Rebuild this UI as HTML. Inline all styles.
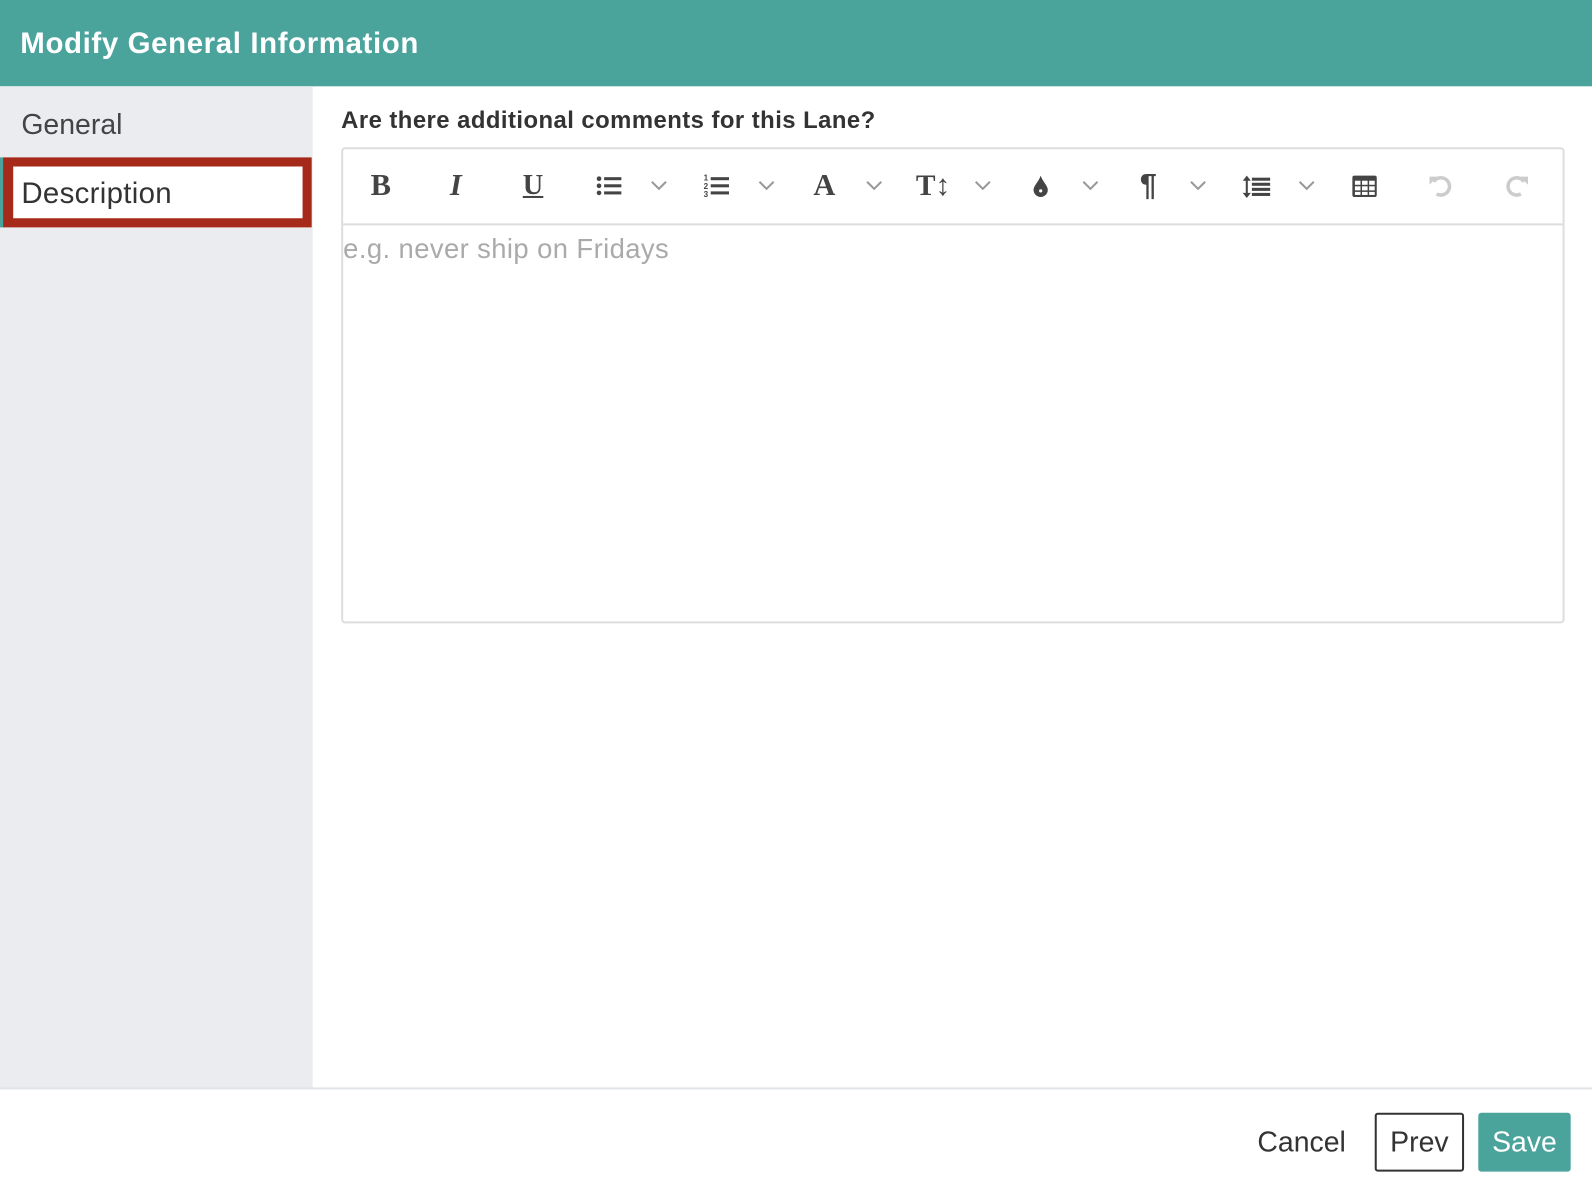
<!DOCTYPE html>
<html><head><meta charset="utf-8"><style>
*{margin:0;padding:0;box-sizing:border-box}
body{width:1592px;height:1190px;background:#fff;font-family:"Liberation Sans",sans-serif;position:relative;overflow:hidden;color:#333}
#w{position:absolute;left:0;top:0;width:1568px;height:1172px;transform:scale(1.0153);transform-origin:0 0}
.a{position:absolute}
.hdr{left:0;top:0;width:1568px;height:85px;background:#4aa49c}
.title{left:20px;top:27px;color:#fff;font-weight:bold;font-size:29px;letter-spacing:0.6px}
.side{left:0;top:85px;width:308px;height:987px;background:#ebecf0}
.gen{left:21px;top:107px;font-size:28px;color:#444}
.desc{left:3px;top:155px;width:304px;height:69px;border:9px solid #a52a1a;border-left-width:10px;background:#fff}
.desc span{position:absolute;left:8px;top:11px;font-size:29px;letter-spacing:0.3px;color:#333}
.label{left:336px;top:105px;font-weight:bold;font-size:23.5px;letter-spacing:0.45px;color:#333}
.ed{left:336px;top:145px;width:1205px;height:469px;border:2px solid #ddd;border-radius:4px}
.tb{left:338px;top:220px;width:1201px;height:2px;background:#ddd}
.ph{left:338px;top:230px;font-size:27px;letter-spacing:0.4px;color:#aaa}
.ic{position:absolute;top:168px;width:30px;height:30px;transform:translateX(-50%);display:flex;align-items:center;justify-content:center}
.s{font-family:"Liberation Serif",serif;font-weight:bold;font-size:30px;color:#444}
.foot{left:0;top:1071px;width:1568px;height:2px;background:#e0e3e7}
.btn{top:1096px;height:58px;font-size:28px;display:flex;align-items:center;justify-content:center;border-radius:3px}
</style></head><body><div id="w">
<div class="a hdr"></div>
<div class="a title">Modify General Information</div>
<div class="a side"></div>
<div class="a" style="left:0;top:155px;width:3px;height:69px;background:#4aa49c"></div>
<div class="a gen">General</div>
<div class="a desc"><span>Description</span></div>
<div class="a label">Are there additional comments for this Lane?</div>
<div class="a ed"></div>
<div class="a tb"></div>
<div class="a ph">e.g. never ship on Fridays</div>

<div class="ic s" style="left:375px">B</div>
<div class="ic s" style="left:449px;font-style:italic">I</div>
<div class="ic s" style="left:525px;text-decoration:underline;font-size:28px">U</div>
<svg class="ic" style="left:600px" viewBox="0 0 30 30"><g fill="#444"><circle cx="5" cy="8" r="2.3"/><circle cx="5" cy="15" r="2.3"/><circle cx="5" cy="22" r="2.3"/><rect x="10" y="6.5" width="17" height="3"/><rect x="10" y="13.5" width="17" height="3"/><rect x="10" y="20.5" width="17" height="3"/></g></svg>
<svg class="ic" style="left:706px" viewBox="0 0 30 30"><g fill="#444"><text x="2" y="10" font-size="8" font-family="Liberation Sans" font-weight="bold">1</text><text x="2" y="18" font-size="8" font-family="Liberation Sans" font-weight="bold">2</text><text x="2" y="26" font-size="8" font-family="Liberation Sans" font-weight="bold">3</text><rect x="9" y="6.5" width="18" height="3"/><rect x="9" y="13.5" width="18" height="3"/><rect x="9" y="20.5" width="18" height="3"/></g></svg>
<div class="ic s" style="left:812px">A</div>
<div class="ic s" style="left:919px;font-size:29px">T↕</div>
<svg class="ic" style="left:1025px" viewBox="0 0 30 30"><path d="M15 5 C17 11 22 15 22 19 a7 7 0 0 1 -14 0 C8 15 13 11 15 5Z" fill="#444"/><circle cx="15" cy="20" r="1.6" fill="#fff"/></svg>
<div class="ic s" style="left:1131px;font-family:'Liberation Sans';font-size:30px">¶</div>
<svg class="ic" style="left:1238px" viewBox="0 0 30 30"><g fill="#444"><rect x="10" y="7" width="18" height="3"/><rect x="10" y="12" width="18" height="3"/><rect x="10" y="17" width="18" height="3"/><rect x="10" y="22" width="18" height="3"/><rect x="4" y="8" width="2" height="16"/><path d="M1 10 L5 5 L9 10Z M1 22 L5 27 L9 22Z"/></g></svg>
<svg class="ic" style="left:1344px" viewBox="0 0 30 30"><rect x="3" y="5" width="24" height="21" rx="2" fill="#444"/><g fill="#fff"><rect x="5.5" y="10" width="5.5" height="4"/><rect x="12.5" y="10" width="5.5" height="4"/><rect x="19.5" y="10" width="5.5" height="4"/><rect x="5.5" y="15.5" width="5.5" height="4"/><rect x="12.5" y="15.5" width="5.5" height="4"/><rect x="19.5" y="15.5" width="5.5" height="4"/><rect x="5.5" y="21" width="5.5" height="3"/><rect x="12.5" y="21" width="5.5" height="3"/><rect x="19.5" y="21" width="5.5" height="3"/></g></svg>
<svg class="ic" style="left:1419px" viewBox="0 0 30 30"><path d="M8 11 A8.5 8.5 0 1 1 11 23" fill="none" stroke="#ccc" stroke-width="3.5"/><path d="M4 6 L12 6 L4 14Z" fill="#ccc"/></svg>
<svg class="ic" style="left:1494px" viewBox="0 0 30 30"><path d="M22 11 A8.5 8.5 0 1 0 19 23" fill="none" stroke="#ccc" stroke-width="3.5"/><path d="M26 6 L18 6 L26 14Z" fill="#ccc"/></svg>

<svg class="a" style="left:0;top:0" width="1568" height="400"><g fill="none" stroke="#999" stroke-width="2"><path d="M642 179 l7 7 l7 -7"/><path d="M748 179 l7 7 l7 -7"/><path d="M854 179 l7 7 l7 -7"/><path d="M961 179 l7 7 l7 -7"/><path d="M1067 179 l7 7 l7 -7"/><path d="M1173 179 l7 7 l7 -7"/><path d="M1280 179 l7 7 l7 -7"/></g></svg>

<div class="a foot"></div>
<div class="a btn" style="left:1230px;width:104px;color:#333">Cancel</div>
<div class="a btn" style="left:1354px;width:88px;border:2px solid #333;color:#333">Prev</div>
<div class="a btn" style="left:1456px;width:91px;background:#4aa49c;color:#fff">Save</div>
</div></body></html>
